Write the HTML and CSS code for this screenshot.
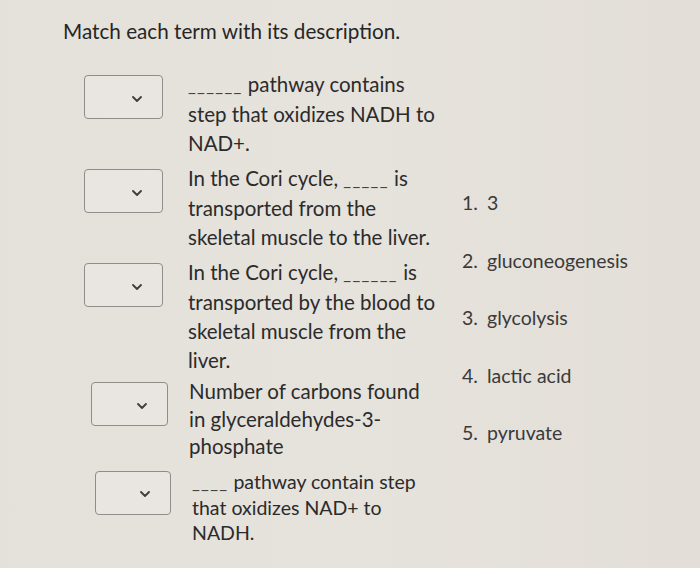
FILE: index.html
```html
<!DOCTYPE html>
<html>
<head>
<meta charset="utf-8">
<link rel="stylesheet" href="styles.css">
</head>
<body>
<div class="page">
  <h1 class="title">Match each term with its description.</h1>
  <div class="content">
    <div class="rows">
      <div class="row">
        <div class="select"><svg class="chev" viewBox="0 0 10 6" width="10" height="6"><path d="M1 1 L5 5 L9 1" /></svg></div>
        <p class="desc"><span class="blank">______</span> pathway contains step that oxidizes NADH to NAD+.</p>
      </div>
      <div class="row">
        <div class="select"><svg class="chev" viewBox="0 0 10 6" width="10" height="6"><path d="M1 1 L5 5 L9 1" /></svg></div>
        <p class="desc">In the Cori cycle, <span class="blank">_____</span> is transported from the skeletal muscle to the liver.</p>
      </div>
      <div class="row">
        <div class="select"><svg class="chev" viewBox="0 0 10 6" width="10" height="6"><path d="M1 1 L5 5 L9 1" /></svg></div>
        <p class="desc">In the Cori cycle, <span class="blank">______</span> is transported by the blood to skeletal muscle from the liver.</p>
      </div>
      <div class="row row-shift">
        <div class="select"><svg class="chev" viewBox="0 0 10 6" width="10" height="6"><path d="M1 1 L5 5 L9 1" /></svg></div>
        <p class="desc desc-narrow">Number of carbons found in glyceraldehydes-3-phosphate</p>
      </div>
      <div class="row row-shift2">
        <div class="select"><svg class="chev" viewBox="0 0 10 6" width="10" height="6"><path d="M1 1 L5 5 L9 1" /></svg></div>
        <p class="desc desc-tight"><span class="blank">____</span> pathway contain step that oxidizes NAD+ to NADH.</p>
      </div>
    </div>
    <ol class="answers">
      <li><span class="num">1.</span><span class="term">3</span></li>
      <li><span class="num">2.</span><span class="term">gluconeogenesis</span></li>
      <li><span class="num">3.</span><span class="term">glycolysis</span></li>
      <li><span class="num">4.</span><span class="term">lactic acid</span></li>
      <li><span class="num">5.</span><span class="term">pyruvate</span></li>
    </ol>
  </div>
</div>
</body>
</html>
```

FILE: styles.css
```css
html, body {
  margin: 0;
  padding: 0;
}
body {
  width: 700px;
  height: 568px;
  overflow: hidden;
  background: linear-gradient(90deg, #e4e0da 0%, #e6e2dc 50%, #e3dfd8 100%);
  font-family: Lato, "Open Sans", sans-serif;
  color: #2b2b2b;
}
.page {
  padding: 16px 0 0 63px;
}
.title {
  margin: 0;
  font-size: 20.7px;
  font-weight: 400;
  line-height: 30px;
  color: #262626;
}
.content {
  display: flex;
  margin-top: 24px;
}
.rows {
  display: flex;
  flex-direction: column;
  gap: 6px;
  margin-left: 21px;
  width: 375px;
}
.row {
  display: flex;
  align-items: flex-start;
}
.row-shift {
  padding-left: 7px;
  margin-top: -3px;
}
.row-shift .select {
  margin-top: 4px;
  width: 77px;
}
.row-shift2 {
  padding-left: 11px;
  margin-top: 2px;
}
.row-shift2 .select {
  margin-top: 2px;
  width: 76px;
}
.row-shift .desc,
.row-shift2 .desc {
  margin-left: -4px;
}
.select {
  box-sizing: border-box;
  width: 79px;
  height: 44px;
  margin-top: 5px;
  margin-right: 25px;
  border: 1.5px solid #8f8d8a;
  border-radius: 4px;
  background: #e9e6e1;
  display: flex;
  align-items: center;
  justify-content: flex-end;
  padding: 3px 20px 0 0;
}
.chev path {
  fill: none;
  stroke: #3d3d3d;
  stroke-width: 1.8;
  stroke-linecap: round;
  stroke-linejoin: round;
}
.desc {
  margin: 0;
  width: 250px;
  font-size: 20.5px;
  line-height: 29px;
  color: #2b2b2b;
}
.desc-narrow {
  width: 232px;
  line-height: 27.5px;
}
.desc-tight {
  line-height: 25px;
  font-size: 19.5px;
}
.blank {
  letter-spacing: 1.3px;
  font-size: 17px;
  color: #444;
}
.answers {
  list-style: none;
  margin: 121px 0 0 3px;
  padding: 0;
  display: flex;
  flex-direction: column;
  gap: 34.5px;
}
.answers li {
  display: flex;
  font-size: 19.5px;
  line-height: 23px;
  color: #3a3a3a;
}
.num {
  width: 25px;
}
```
